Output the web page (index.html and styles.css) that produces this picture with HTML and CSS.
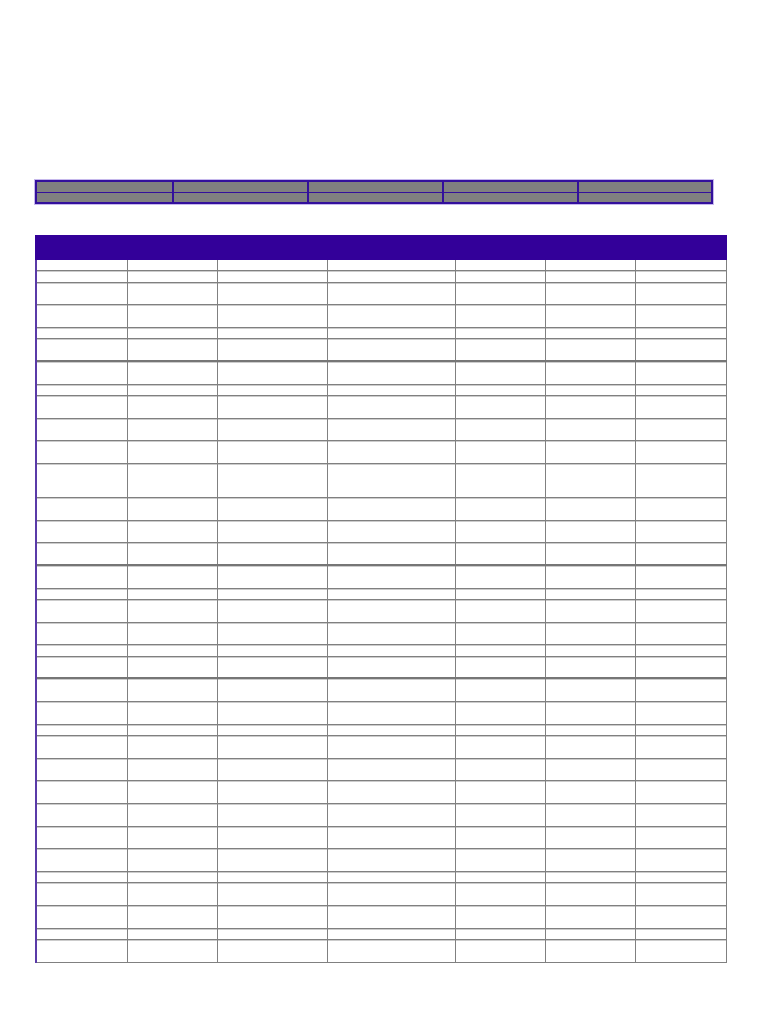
FILE: index.html
```html
<!DOCTYPE html>
<html lang="en">
<head>
<meta charset="utf-8">
<title>Sheet</title>
<link rel="stylesheet" href="styles.css">
</head>
<body>
<div class="page">
  <div class="summary">
    <div class="cell"></div><div class="cell"></div><div class="cell"></div><div class="cell"></div><div class="cell"></div>
    <div class="cell"></div><div class="cell"></div><div class="cell"></div><div class="cell"></div><div class="cell"></div>
  </div>

  <div class="sheet">
    <div class="sheet-head"></div>
    <div class="sheet-body">
      <div class="row s first"><i></i><i></i><i></i><i></i><i></i><i></i><i></i></div>
      <div class="row s"><i></i><i></i><i></i><i></i><i></i><i></i><i></i></div>
      <div class="row n"><i></i><i></i><i></i><i></i><i></i><i></i><i></i></div>
      <div class="row n"><i></i><i></i><i></i><i></i><i></i><i></i><i></i></div>
      <div class="row s"><i></i><i></i><i></i><i></i><i></i><i></i><i></i></div>
      <div class="row n k"><i></i><i></i><i></i><i></i><i></i><i></i><i></i></div>
      <div class="row n"><i></i><i></i><i></i><i></i><i></i><i></i><i></i></div>
      <div class="row s"><i></i><i></i><i></i><i></i><i></i><i></i><i></i></div>
      <div class="row n"><i></i><i></i><i></i><i></i><i></i><i></i><i></i></div>
      <div class="row n"><i></i><i></i><i></i><i></i><i></i><i></i><i></i></div>
      <div class="row n"><i></i><i></i><i></i><i></i><i></i><i></i><i></i></div>
      <div class="row t"><i></i><i></i><i></i><i></i><i></i><i></i><i></i></div>
      <div class="row n"><i></i><i></i><i></i><i></i><i></i><i></i><i></i></div>
      <div class="row n"><i></i><i></i><i></i><i></i><i></i><i></i><i></i></div>
      <div class="row n k"><i></i><i></i><i></i><i></i><i></i><i></i><i></i></div>
      <div class="row n"><i></i><i></i><i></i><i></i><i></i><i></i><i></i></div>
      <div class="row s"><i></i><i></i><i></i><i></i><i></i><i></i><i></i></div>
      <div class="row n"><i></i><i></i><i></i><i></i><i></i><i></i><i></i></div>
      <div class="row n"><i></i><i></i><i></i><i></i><i></i><i></i><i></i></div>
      <div class="row s"><i></i><i></i><i></i><i></i><i></i><i></i><i></i></div>
      <div class="row n k"><i></i><i></i><i></i><i></i><i></i><i></i><i></i></div>
      <div class="row n"><i></i><i></i><i></i><i></i><i></i><i></i><i></i></div>
      <div class="row n"><i></i><i></i><i></i><i></i><i></i><i></i><i></i></div>
      <div class="row s"><i></i><i></i><i></i><i></i><i></i><i></i><i></i></div>
      <div class="row n"><i></i><i></i><i></i><i></i><i></i><i></i><i></i></div>
      <div class="row n"><i></i><i></i><i></i><i></i><i></i><i></i><i></i></div>
      <div class="row n"><i></i><i></i><i></i><i></i><i></i><i></i><i></i></div>
      <div class="row n"><i></i><i></i><i></i><i></i><i></i><i></i><i></i></div>
      <div class="row n"><i></i><i></i><i></i><i></i><i></i><i></i><i></i></div>
      <div class="row n"><i></i><i></i><i></i><i></i><i></i><i></i><i></i></div>
      <div class="row s"><i></i><i></i><i></i><i></i><i></i><i></i><i></i></div>
      <div class="row n"><i></i><i></i><i></i><i></i><i></i><i></i><i></i></div>
      <div class="row n"><i></i><i></i><i></i><i></i><i></i><i></i><i></i></div>
      <div class="row s"><i></i><i></i><i></i><i></i><i></i><i></i><i></i></div>
      <div class="row n"><i></i><i></i><i></i><i></i><i></i><i></i><i></i></div>
    </div>
  </div>
</div>
</body>
</html>
```
FILE: styles.css
```css
html, body {
  margin: 0;
  padding: 0;
  background: #ffffff;
  font-family: "Liberation Sans", Arial, sans-serif;
}

.page {
  padding: 180px 0 0 35px;
}

.summary {
  display: grid;
  grid-template-columns: 135px 133px 133px 133px 132px;
  grid-template-rows: 10px 9px;
  column-gap: 2px;
  row-gap: 1px;
  padding: 2px;
  width: max-content;
  background: #33109c;
  box-shadow: 0 0 0 1px #c6b8ec;
}

.summary .cell {
  background: #808080;
}

.sheet {
  margin-top: 31px;
  width: 692px;
}

.sheet-head {
  height: 25px;
  background: #330099;
}

.sheet-body {
  border-left: 2px solid #5a3aa8;
}

.row {
  display: grid;
  grid-template-columns: 91px 90px 110px 128px 90px 90px 91px;
  box-sizing: border-box;
  border-bottom: 1px solid #808080;
  box-shadow: inset 0 1px 0 #cccccc;
}

.row.first {
  box-shadow: none;
}

.row.s { height: 11.34px; }
.row.n { height: 22.68px; }
.row.t { height: 34px; }

.row.k {
  border-bottom: 2px solid #767676;
}

.row i {
  display: block;
  border-right: 1px solid #808080;
}
```
